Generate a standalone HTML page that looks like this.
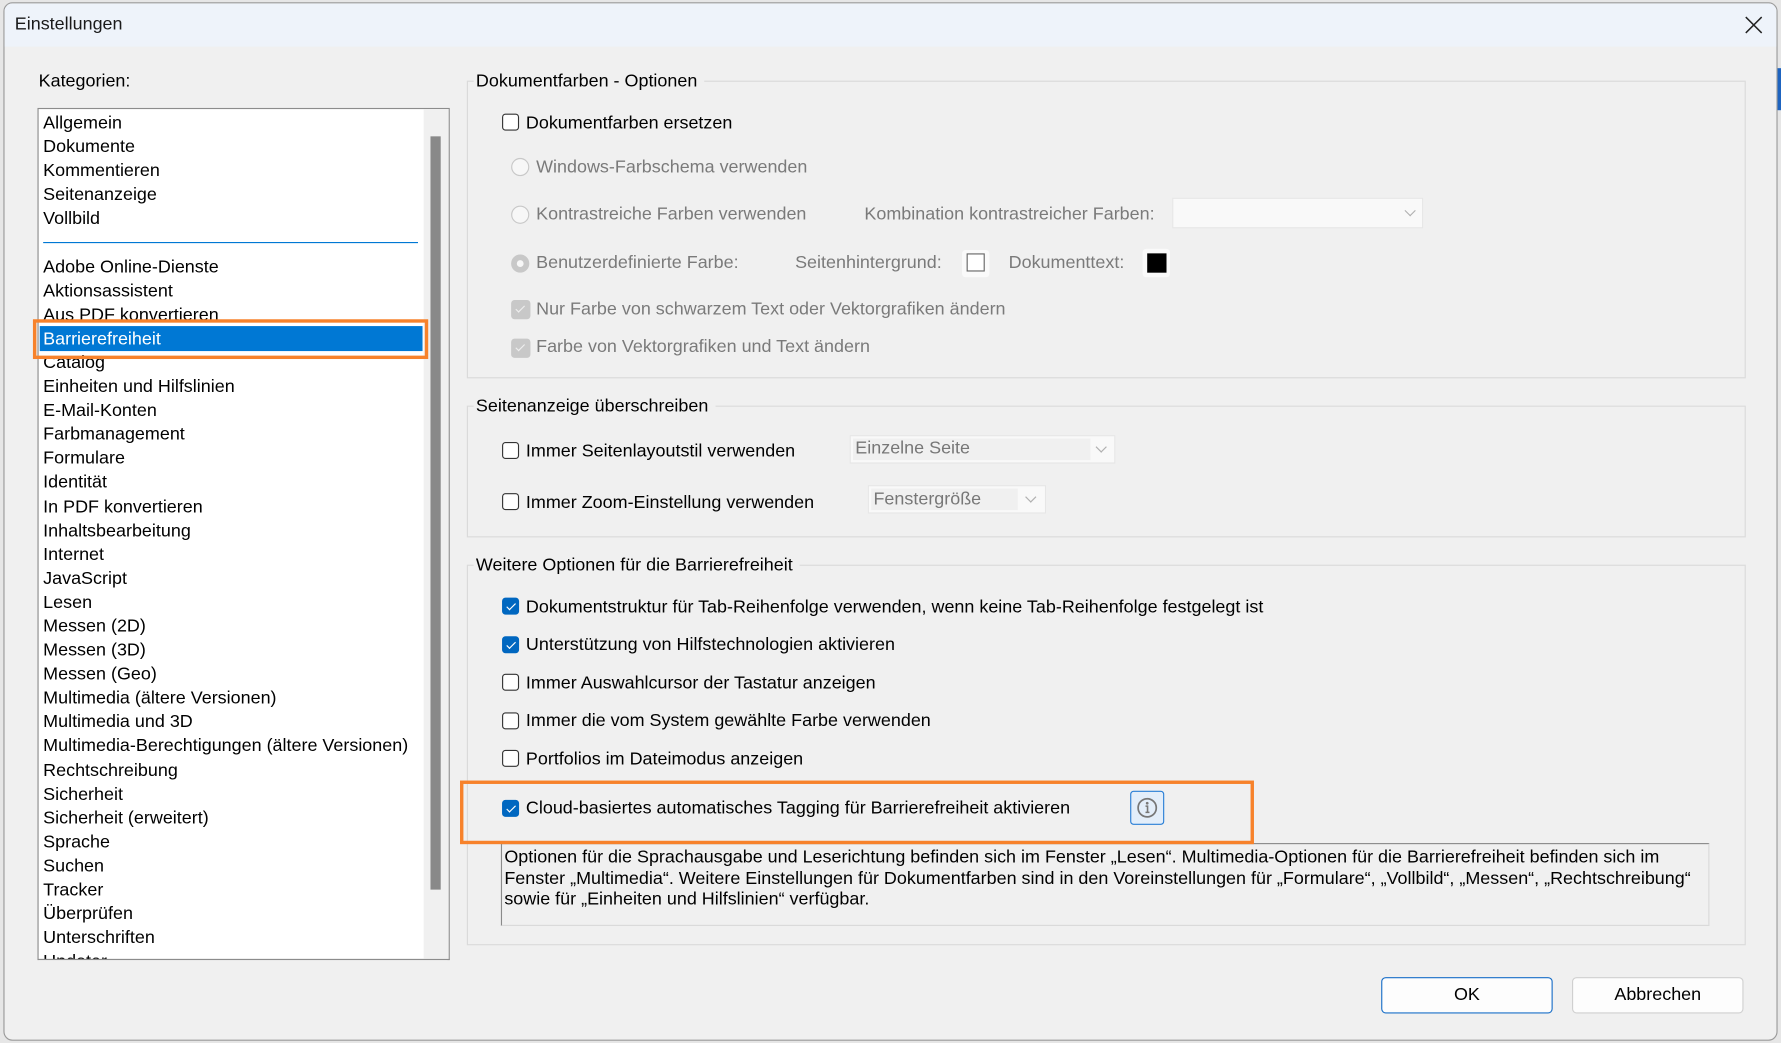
<!DOCTYPE html>
<html><head><meta charset="utf-8">
<style>
html,body{margin:0;padding:0;width:1781px;height:1043px;overflow:hidden;background:#e6e6e6;}
#w{position:absolute;left:0;top:0;width:1568px;height:918px;transform:scale(1.13584,1.13617);transform-origin:0 0;font-family:"Liberation Sans",sans-serif;font-size:15.8px;color:#000;}
.a{position:absolute;white-space:nowrap;line-height:18px;margin-top:1px;}
.dlg{position:absolute;left:3px;top:2px;width:1560px;height:912px;background:#f0f0f0;border:1px solid #9a9a9a;border-radius:8px;overflow:hidden;}
.tb{position:absolute;left:0;top:0;right:0;height:38px;background:#eef3fa;}
.grp{position:absolute;border:1px solid #dadada;}
.lbl{position:absolute;background:#f0f0f0;padding:0 6px 0 2px;line-height:18px;white-space:nowrap;margin-top:1px;}
.cb{position:absolute;width:15px;height:15px;border:1px solid #333;border-radius:3px;background:#fff;box-sizing:border-box;margin-top:1px;}
.cb.on{background:#0067c0;border-color:#0067c0;}
.cb.on::after{content:"";position:absolute;left:5px;top:2px;width:3px;height:7px;border:solid #fff;border-width:0 1px 1px 0;transform:rotate(45deg);}
.cb.dis{background:#c8c8c8;border-color:#c8c8c8;}
.cb.dis::after{content:"";position:absolute;left:5px;top:2px;width:3px;height:7px;border:solid #eee;border-width:0 1px 1px 0;transform:rotate(45deg);}
.rb{position:absolute;width:16px;height:16px;border:1px solid #c8c8c8;border-radius:50%;background:#f7f7f7;box-sizing:border-box;margin-top:1px;}
.g{color:#7a7a7a;}
.dd{position:absolute;background:#f9f9f9;border:1px solid #e6e6e6;box-sizing:border-box;}
.chev{position:absolute;width:6px;height:6px;border:solid #b0b0b0;border-width:0 1px 1px 0;transform:rotate(45deg);}
.btn{position:absolute;background:#fdfdfd;border:1px solid #d0d0d0;border-radius:4px;box-sizing:border-box;text-align:center;line-height:30px;}
</style></head><body>
<div id="w">
<div style="position:absolute;left:1563px;top:60px;width:5px;height:37px;background:#1e64c0"></div>
<div class="dlg">
  <div class="tb"></div>
  <div class="a" style="left:9px;top:9px;color:#1a1a1a">Einstellungen</div>
  <svg style="position:absolute;left:1532px;top:11px" width="16" height="16"><path d="M1 1L15 15M15 1L1 15" stroke="#222" stroke-width="1.3"/></svg>
</div>
<div class="a" style="left:34px;top:62px">Kategorien:</div>
<div style="position:absolute;left:33px;top:95px;width:363px;height:750px;background:#fff;border:1px solid #8c8c8c;box-sizing:border-box;overflow:hidden">
  <div style="position:absolute;right:0;top:0;width:22px;height:100%;background:#f0f0f0"></div>
  <div style="position:absolute;left:345px;top:24px;width:9px;height:663px;background:#898989"></div>
  <div style="position:absolute;left:4px;top:117px;width:330px;height:1px;background:#0078d4"></div>
  <div style="position:absolute;left:1px;top:191px;width:337px;height:22px;background:#0078d4"></div>
</div>
<div style="position:absolute;left:38px;top:98px;line-height:21.1px">
Allgemein<br>Dokumente<br>Kommentieren<br>Seitenanzeige<br>Vollbild<br><br>Adobe Online-Dienste<br>Aktionsassistent<br>Aus PDF konvertieren<br><span style="color:#fff">Barrierefreiheit</span><br>Catalog<br>Einheiten und Hilfslinien<br>E-Mail-Konten<br>Farbmanagement<br>Formulare<br>Identität<br>In PDF konvertieren<br>Inhaltsbearbeitung<br>Internet<br>JavaScript<br>Lesen<br>Messen (2D)<br>Messen (3D)<br>Messen (Geo)<br>Multimedia (ältere Versionen)<br>Multimedia und 3D<br>Multimedia-Berechtigungen (ältere Versionen)<br>Rechtschreibung<br>Sicherheit<br>Sicherheit (erweitert)<br>Sprache<br>Suchen<br>Tracker<br>Überprüfen<br>Unterschriften<br>Updater
</div>
<div style="position:absolute;left:34px;top:844px;width:360px;height:30px;background:#f0f0f0"></div>
<div style="position:absolute;left:33px;top:844px;width:363px;height:1px;background:#8c8c8c"></div>
<div style="position:absolute;left:29px;top:281px;width:348px;height:35px;border:3px solid #f7822b;box-sizing:border-box"></div>

<!-- group 1 -->
<div class="grp" style="left:411px;top:71px;width:1124px;height:260px"></div>
<div class="lbl" style="left:417px;top:62px">Dokumentfarben - Optionen</div>
<div class="cb" style="left:442px;top:99px"></div><div class="a" style="left:463px;top:99px">Dokumentfarben ersetzen</div>
<div class="rb" style="left:450px;top:138px"></div><div class="a g" style="left:472px;top:138px">Windows-Farbschema verwenden</div>
<div class="rb" style="left:450px;top:180px"></div><div class="a g" style="left:472px;top:179px">Kontrastreiche Farben verwenden</div>
<div class="a g" style="left:761px;top:179px">Kombination kontrastreicher Farben:</div>
<div class="dd" style="left:1032px;top:174px;width:221px;height:27px"><div class="chev" style="left:205px;top:7px"></div></div>
<div class="rb" style="left:450px;top:223px;border:5px solid #c8c8c8;background:#f7f7f7"></div><div class="a g" style="left:472px;top:222px">Benutzerdefinierte Farbe:</div>
<div class="a g" style="left:700px;top:222px">Seitenhintergrund:</div>
<div style="position:absolute;left:847px;top:220px;width:24px;height:24px;background:#fafafa;border-radius:3px"></div>
<div style="position:absolute;left:851px;top:223px;width:16px;height:16px;border:1.5px solid #666;box-sizing:border-box;background:#fff"></div>
<div class="a g" style="left:888px;top:222px">Dokumenttext:</div>
<div style="position:absolute;left:1006px;top:219px;width:24px;height:25px;background:#fafafa;border-radius:3px"></div>
<div style="position:absolute;left:1010px;top:223px;width:17px;height:17px;background:#000"></div>
<div class="cb dis" style="left:450px;top:263px;width:17px;height:17px"></div><div class="a g" style="left:472px;top:263px">Nur Farbe von schwarzem Text oder Vektorgrafiken ändern</div>
<div class="cb dis" style="left:450px;top:297px;width:17px;height:17px"></div><div class="a g" style="left:472px;top:296px">Farbe von Vektorgrafiken und Text ändern</div>

<!-- group 2 -->
<div class="grp" style="left:411px;top:357px;width:1124px;height:114px"></div>
<div class="lbl" style="left:417px;top:348px">Seitenanzeige überschreiben</div>
<div class="cb" style="left:442px;top:388px"></div><div class="a" style="left:463px;top:388px">Immer Seitenlayoutstil verwenden</div>
<div class="dd" style="left:748px;top:383px;width:234px;height:25px"><div style="position:absolute;left:2px;top:2px;width:209px;height:19px;background:#f0f0f0"></div><div class="a g" style="left:4px;top:1px;color:#777">Einzelne Seite</div><div class="chev" style="left:217px;top:6px"></div></div>
<div class="cb" style="left:442px;top:433px"></div><div class="a" style="left:463px;top:433px">Immer Zoom-Einstellung verwenden</div>
<div class="dd" style="left:764px;top:427px;width:157px;height:25px"><div style="position:absolute;left:2px;top:2px;width:129px;height:19px;background:#f0f0f0"></div><div class="a g" style="left:4px;top:2px;color:#777">Fenstergröße</div><div class="chev" style="left:139px;top:6px"></div></div>

<!-- group 3 -->
<div class="grp" style="left:411px;top:497px;width:1124px;height:333px"></div>
<div class="lbl" style="left:417px;top:488px">Weitere Optionen für die Barrierefreiheit</div>
<div class="cb on" style="left:442px;top:525px"></div><div class="a" style="left:463px;top:525px">Dokumentstruktur für Tab-Reihenfolge verwenden, wenn keine Tab-Reihenfolge festgelegt ist</div>
<div class="cb on" style="left:442px;top:559px"></div><div class="a" style="left:463px;top:558px">Unterstützung von Hilfstechnologien aktivieren</div>
<div class="cb" style="left:442px;top:592px"></div><div class="a" style="left:463px;top:592px">Immer Auswahlcursor der Tastatur anzeigen</div>
<div class="cb" style="left:442px;top:626px"></div><div class="a" style="left:463px;top:625px">Immer die vom System gewählte Farbe verwenden</div>
<div class="cb" style="left:442px;top:659px"></div><div class="a" style="left:463px;top:659px">Portfolios im Dateimodus anzeigen</div>
<div class="cb on" style="left:442px;top:703px"></div><div class="a" style="left:463px;top:702px">Cloud-basiertes automatisches Tagging für Barrierefreiheit aktivieren</div>
<div style="position:absolute;left:995px;top:696px;width:30px;height:30px;border:1px solid #2a7fd6;border-radius:3px;background:#e3eefa;box-sizing:border-box"></div>
<svg style="position:absolute;left:1000px;top:701px" width="20" height="20"><circle cx="10" cy="10" r="8" fill="none" stroke="#777" stroke-width="1.5"/><circle cx="10" cy="6" r="1.2" fill="#777"/><path d="M8.5 8.5H10.3V14M8.5 14H12" stroke="#777" stroke-width="1.4" fill="none"/></svg>
<div style="position:absolute;left:441px;top:742px;width:1064px;height:73px;background:#f0f0f0;border:1px solid #dadada;border-top:1px solid #8a8a8a;border-left:1px solid #8a8a8a;box-sizing:border-box"></div>
<div style="position:absolute;left:444px;top:746px;line-height:18.5px;width:1060px;font-size:15.8px;white-space:nowrap">Optionen für die Sprachausgabe und Leserichtung befinden sich im Fenster „Lesen“. Multimedia-Optionen für die Barrierefreiheit befinden sich im<br>Fenster „Multimedia“. Weitere Einstellungen für Dokumentfarben sind in den Voreinstellungen für „Formulare“, „Vollbild“, „Messen“, „Rechtschreibung“<br>sowie für „Einheiten und Hilfslinien“ verfügbar.</div>
<div style="position:absolute;left:405px;top:687px;width:699px;height:56px;border:3px solid #f7822b;box-sizing:border-box"></div>

<div class="btn" style="left:1216px;top:860px;width:151px;height:32px;border:1.5px solid #1a6fc8;">OK</div>
<div class="btn" style="left:1384px;top:860px;width:151px;height:32px">Abbrechen</div>
</div>
</body></html>
